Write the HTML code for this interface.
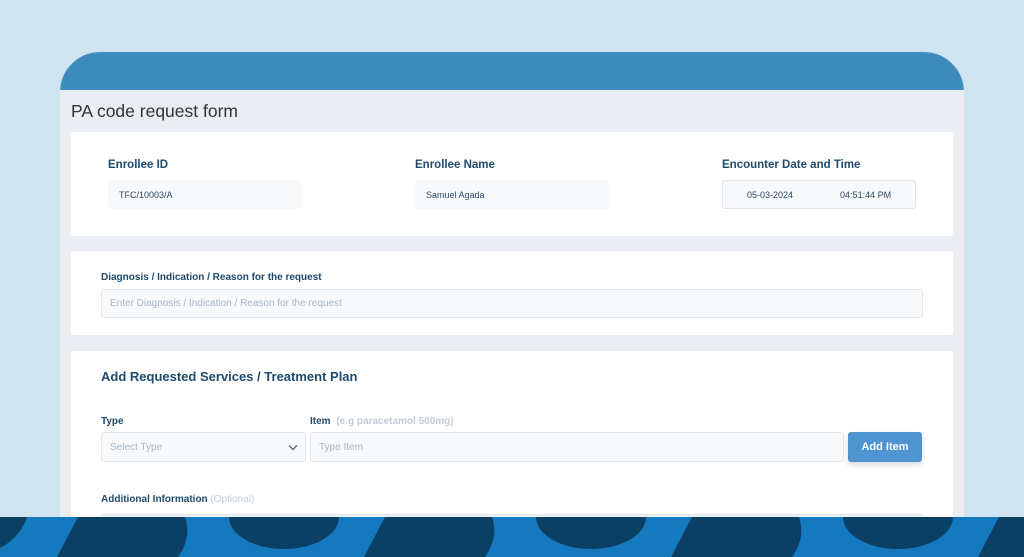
<!DOCTYPE html>
<html style="width:1024px;height:557px;overflow:hidden"><head><meta charset="utf-8"><style>
*{margin:0;padding:0;box-sizing:border-box}
body{width:1024px;height:557px;background:#cfe3f1;position:relative;overflow:hidden;font-family:"Liberation Sans",sans-serif}
.abs{position:absolute}
.card{left:60px;top:52px;width:904px;height:505px;background:#eaeef3;border-radius:40px 40px 0 0;overflow:hidden}
.hdr{left:0;top:0;width:904px;height:38px;background:#3d8cbc}
.panel{background:#fff;border-radius:3px}
.lbl{font-weight:bold;color:#1f4a6b;font-size:11px}
.box{background:#f7f9fb;border-radius:3px;font-size:9px;color:#2c4a66;display:flex;align-items:center}
.inp{background:#f7f9fb;border:1px solid #e1e6ec;border-radius:3px;font-size:10px;color:#a8b6c4;display:flex;align-items:center;padding-left:8px}
</style></head><body>
<div class="abs card">
 <div class="abs hdr"></div>
</div>
<div class="abs" style="left:71px;top:101px;font-size:17.5px;color:#333">PA code request form</div>

<div class="abs panel" style="left:71px;top:132px;width:882px;height:104px"></div>
<div class="abs lbl" style="left:108px;top:159px;font-size:11.5px">Enrollee ID</div>
<div class="abs lbl" style="left:415px;top:159px;font-size:11.5px">Enrollee Name</div>
<div class="abs lbl" style="left:722px;top:159px;font-size:11.5px">Encounter Date and Time</div>
<div class="abs box" style="left:108px;top:180px;width:194px;height:29px;padding-left:11px">TFC/10003/A</div>
<div class="abs box" style="left:415px;top:180px;width:194px;height:29px;padding-left:11px">Samuel Agada</div>
<div class="abs box" style="left:722px;top:180px;width:194px;height:29px;border:1px solid #e1e6ec"><span style="margin-left:24px">05-03-2024</span><span style="margin-left:47px">04:51:44 PM</span></div>

<div class="abs panel" style="left:71px;top:251px;width:882px;height:84px"></div>
<div class="abs lbl" style="left:101px;top:272px;font-size:10px">Diagnosis / Indication / Reason for the request</div>
<div class="abs inp" style="left:101px;top:289px;width:822px;height:29px">Enter Diagnosis / Indication / Reason for the request</div>

<div class="abs panel" style="left:71px;top:351px;width:882px;height:206px"></div>
<div class="abs lbl" style="left:101px;top:369px;font-size:13px">Add Requested Services / Treatment Plan</div>
<div class="abs lbl" style="left:101px;top:416px;font-size:10px">Type</div>
<div class="abs lbl" style="left:310px;top:416px;font-size:10px">Item <span style="color:#c2ccd6;margin-left:3px;font-weight:bold">(e.g paracetamol 500mg)</span></div>
<div class="abs inp" style="left:101px;top:432px;width:205px;height:30px">Select Type
 <svg class="abs" style="left:186px;top:11px" width="10" height="7" viewBox="0 0 10 7"><path d="M1 1.5L5 5.5L9 1.5" fill="none" stroke="#5a6b7c" stroke-width="1.4"/></svg></div>
<div class="abs inp" style="left:310px;top:432px;width:534px;height:30px">Type Item</div>
<div class="abs" style="left:848px;top:432px;width:74px;height:30px;background:#4f94d0;border-radius:3px;color:#fff;font-size:11px;font-weight:bold;display:flex;align-items:center;justify-content:center;box-shadow:0 3px 6px rgba(0,0,0,.15)">Add Item</div>
<div class="abs lbl" style="left:101px;top:494px;font-size:10px">Additional Information <span style="color:#c2ccd6;font-weight:normal">(Optional)</span></div>
<div class="abs" style="left:101px;top:514px;width:822px;height:10px;background:#eef1f4;border:1px solid #e1e6ec"></div>

<svg class="abs" style="left:0;top:517px" width="1024" height="40" viewBox="0 517 1024 40">
 <rect x="0" y="517" width="1024" height="40" fill="#1579bf"/>
 <circle cx="-23" cy="500" r="53" fill="#0b3f63"/>
 <g fill="#0b3f63">
  <path d="M78,517 L185,517 Q192,537 178,557 L57,557 Z"/>
  <path d="M229,517 A55,32 0 0 0 339,517 Z"/>
  <path d="M385,517 L492,517 Q499,537 485,557 L364,557 Z"/>
  <path d="M536,517 A55,32 0 0 0 646,517 Z"/>
  <path d="M692,517 L799,517 Q806,537 792,557 L671,557 Z"/>
  <path d="M843,517 A55,32 0 0 0 953,517 Z"/>
  <path d="M999,517 L1106,517 Q1113,537 1099,557 L978,557 Z"/>
 </g>
</svg>
</body></html>
